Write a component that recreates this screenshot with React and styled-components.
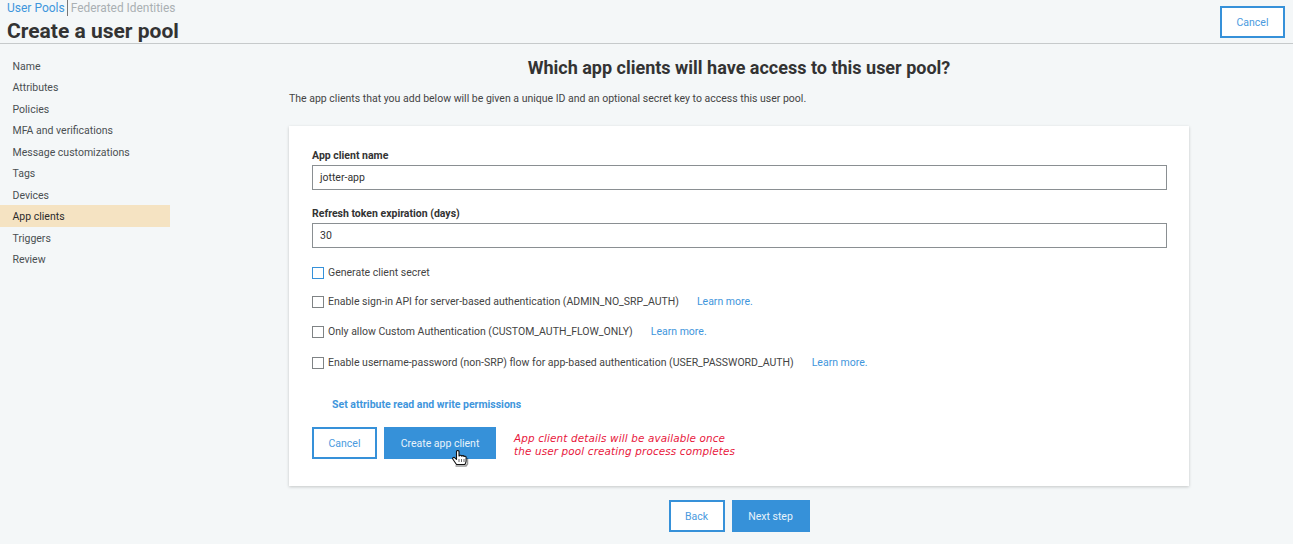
import React from "react";
import styled, { createGlobalStyle, css } from "styled-components";

const Global = createGlobalStyle`
  html, body { margin: 0; padding: 0; background: #f4f7f8; }
  body { font-family: Roboto, "Liberation Sans", sans-serif; font-size: 10.5px; color: #333; overflow: hidden; }
  * { box-sizing: border-box; }
`;
const Page = styled.div`width: 1293px; height: 544px; overflow: hidden; display: flex; flex-direction: column;`;
const Header = styled.header`
  height: 44px; border-bottom: 1px solid #c6cacb; display: flex; justify-content: space-between; padding: 0 8px 0 7px; flex: none;
`;
const TitleBlock = styled.div`display: flex; flex-direction: column;`;
const Tabs = styled.div`display: flex; align-items: center; height: 16px; line-height: 16px;`;
const Tab = styled.a`
  font-size: ${p => (p.$active ? "12px" : "11.9px")};
  color: ${p => (p.$active ? "#3f96dc" : "#aab0b3")};
  padding-right: ${p => (p.$active ? "2px" : "0")};
  ${p => p.$active && css`border-right: 1px solid #777; margin-right: 3px;`}
`;
const Title = styled.h1`margin: 2px 0 0; font-size: 21px; line-height: 26px; font-weight: 700; color: #333;`;
const Button = styled.button`
  font-family: inherit; font-size: 10.5px; border-radius: 0; cursor: pointer; height: 32px;
  width: ${p => p.$w}px; padding: 0;
  background: ${p => (p.$primary ? "#3691d9" : "#fff")};
  color: ${p => (p.$primary ? "#e8f3fb" : "#4a9ade")};
  border: ${p => (p.$primary ? "none" : "2px solid #3691d9")};
`;
const HeaderButton = styled(Button)`margin-top: 6px;`;
const Body = styled.div`display: flex; flex: 1; min-height: 0;`;
const Side = styled.nav`width: 170px; flex: none; padding-top: 11.5px;`;
const NavItem = styled.div`
  height: 21.5px; line-height: 21.5px; padding-left: 12.5px; font-size: 10.5px; color: #4a4f52;
  ${p => p.$active && css`
    height: 22px; margin: -1px 0 .5px; line-height: 23.5px; color: #2b2b2b; background: #f5e3c2;
  `}
`;
const Main = styled.main`margin-left: 119px; width: 900px; display: flex; flex-direction: column;`;
const Heading = styled.h2`margin: 13px 0 0; text-align: center; font-size: 18px; line-height: 22px; font-weight: 700; color: #333;`;
const Lead = styled.p`margin: 13px 0 0; font-size: 10.5px; line-height: 14px; color: #444;`;
const Card = styled.section`
  margin-top: 20px; background: #fff; height: 360px; padding: 23px 22px 0 23px;
  box-shadow: 0 1px 3px rgba(0,0,0,.2);
`;
const FieldLabel = styled.label`display: block; font-size: 10.5px; line-height: 13px; font-weight: 700; color: #333; margin-bottom: 3px;`;
const Input = styled.div`
  height: 25px; border: 1px solid #8a8f92; background: #fff; font-size: 10.5px; line-height: 23px; padding-left: 7px; color: #333; margin-bottom: 17px;
`;
const Checks = styled.div`display: flex; flex-direction: column; margin-top: 18px;`;
const CheckRow = styled.div`display: flex; align-items: center; height: 14px; margin-bottom: ${p => p.$gap}px;`;
const Box = styled.span`
  width: 12px; height: 12px; flex: none; background: #fff; margin-right: 4px;
  border: 1px solid ${p => (p.$focus ? "#3691d9" : "#7f8385")};
`;
const CheckText = styled.span`font-size: 10.5px; color: #444; line-height: 14px;`;
const Learn = styled.a`font-size: 10.5px; color: #3f96dc; margin-left: 18px; position: relative; top: -1px;`;
const Perm = styled.a`display: block; margin: 28px 0 0 20px; font-size: 10.5px; line-height: 14px; font-weight: 700; color: #3f96dc;`;
const Actions = styled.div`display: flex; align-items: center; margin-top: 15px;`;
const ActionButton = styled(Button)`position: relative; margin-right: ${p => p.$mr}px;`;
const Note = styled.div`
  font-family: "DejaVu Sans", sans-serif; font-style: italic; font-size: 10.4px; line-height: 13px; color: #e8173c; white-space: pre-line; margin: 4px 0 0 18px; letter-spacing: .14px;
`;
const Cursor = styled.svg`position: absolute; left: 68px; top: 23px; width: 17px; height: 17px;`;
const Footer = styled.div`display: flex; justify-content: center; gap: 7px; margin-top: 14px;`;

const nav = ["Name","Attributes","Policies","MFA and verifications","Message customizations","Tags","Devices","App clients","Triggers","Review"];

export default function App() {
  return (
    <Page>
      <Global />
      <Header>
        <TitleBlock>
          <Tabs><Tab $active>User Pools</Tab><Tab>Federated Identities</Tab></Tabs>
          <Title>Create a user pool</Title>
        </TitleBlock>
        <HeaderButton $w={65}>Cancel</HeaderButton>
      </Header>
      <Body>
        <Side>
          {nav.map(n => <NavItem key={n} $active={n === "App clients"}>{n}</NavItem>)}
        </Side>
        <Main>
          <Heading>Which app clients will have access to this user pool?</Heading>
          <Lead>The app clients that you add below will be given a unique ID and an optional secret key to access this user pool.</Lead>
          <Card>
            <FieldLabel>App client name</FieldLabel>
            <Input>jotter-app</Input>
            <FieldLabel>Refresh token expiration (days)</FieldLabel>
            <Input>30</Input>
            <Checks>
              <CheckRow $gap={15}><Box $focus /><CheckText>Generate client secret</CheckText></CheckRow>
              <CheckRow $gap={16}><Box /><CheckText>Enable sign-in API for server-based authentication (ADMIN_NO_SRP_AUTH)</CheckText><Learn>Learn more.</Learn></CheckRow>
              <CheckRow $gap={17}><Box /><CheckText>Only allow Custom Authentication (CUSTOM_AUTH_FLOW_ONLY)</CheckText><Learn>Learn more.</Learn></CheckRow>
              <CheckRow $gap={0}><Box /><CheckText>Enable username-password (non-SRP) flow for app-based authentication (USER_PASSWORD_AUTH)</CheckText><Learn>Learn more.</Learn></CheckRow>
            </Checks>
            <Perm>Set attribute read and write permissions</Perm>
            <Actions>
              <ActionButton $w={65} $mr={7}>Cancel</ActionButton>
              <ActionButton $w={112} $primary>
                Create app client
                <Cursor viewBox="0 0 17 17">
                  <path d="M3.500 16h10.500l1.500-2V8" fill="none" stroke="#000" strokeOpacity=".4" strokeWidth="1.500" />
                  <path d="M4.500 1.500c0-1.300 2.500-1.300 2.500 0V6h.2c.3-1 2.200-1 2.500.2.400-.8 2.100-.8 2.400.3.500-.5 2-.4 2 .8v3.700c0 1.300-.5 2.200-1.200 3.500H4.500L.9 9.300c-.9-1.300.9-2.600 2-1.500l1.600 1.500z" fill="#fff" stroke="#111" strokeWidth="1.100" strokeLinejoin="round" />
                  <path d="M7 9v3M9.500 9v3M12 9v3" stroke="#555" strokeWidth=".9" />
                </Cursor>
              </ActionButton>
              <Note>{"App client details will be available once\nthe user pool creating process completes"}</Note>
            </Actions>
          </Card>
          <Footer>
            <Button $w={56}>Back</Button>
            <Button $w={78} $primary>Next step</Button>
          </Footer>
        </Main>
      </Body>
    </Page>
  );
}
